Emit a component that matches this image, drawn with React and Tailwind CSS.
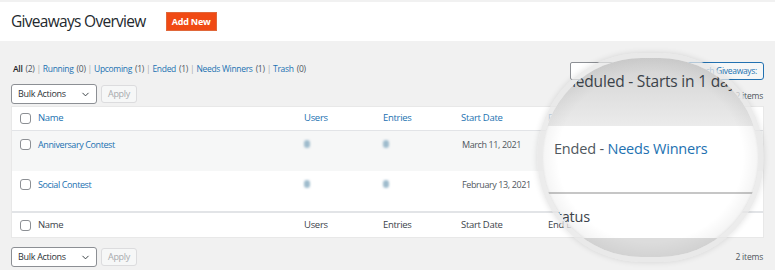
import { ChevronDown } from 'lucide-react';

const filters = [
  { label: 'All', count: 2, current: true },
  { label: 'Running', count: 0 },
  { label: 'Upcoming', count: 1 },
  { label: 'Ended', count: 1 },
  { label: 'Needs Winners', count: 1 },
  { label: 'Trash', count: 0 },
];

const rows = [
  { name: 'Anniversary Contest', date: 'March 11, 2021', alt: true },
  { name: 'Social Contest', date: 'February 13, 2021' },
];

function Checkbox() {
  return <span className="block w-[11px] h-[11px] rounded-[3px] border border-[#8c8f94] bg-white" />;
}

function BulkBar() {
  return (
    <div className="flex items-center gap-[4px]">
      <div className="w-[86px] h-[20px] flex items-center justify-between pl-[6px] pr-[5px] bg-white border border-[#8c8f94] rounded-[3px] text-[9px] tracking-[-0.3px] text-[#2c3338]">
        <span>Bulk Actions</span>
        <ChevronDown className="w-[11px] h-[11px]" strokeWidth={2} />
      </div>
      <div className="w-[36px] h-[18px] flex items-center justify-center border border-[#dcdcde] rounded-[3px] bg-[#f6f7f7] text-[9px] tracking-[-0.3px] text-[#a7aaad]">
        Apply
      </div>
    </div>
  );
}

function HeadRow({ linked, top }) {
  const c = linked ? 'text-[#2271b1]' : 'text-[#3c434a]';
  return (
    <div className={`flex items-center text-[9.5px] tracking-[-0.3px] ${top ? 'h-[24px] border-b border-[#e2e4e7]' : 'h-[26px] border-t-2 border-[#e2e4e7]'}`}>
      <div className="w-[26px] pl-[8px]"><Checkbox /></div>
      <div className={`w-[266px] ${c}`}>Name</div>
      <div className={`w-[79px] ${c}`}>Users</div>
      <div className={`w-[78px] ${c}`}>Entries</div>
      <div className={`w-[87px] ${c}`}>Start Date</div>
      <div className={`w-[90px] ${c}`}>End Date</div>
      <div className={c}>Status</div>
    </div>
  );
}

function Dot() {
  return <span className="block w-[6px] h-[8px] rounded-full bg-[#9fbccd] blur-[1px]" />;
}

export default function App() {
  return (
    <div className="relative w-[775px] h-[270px] overflow-hidden bg-[#f1f1f1] font-['Open_Sans',sans-serif]">
      {/* header */}
      <div className="mt-[2px] h-[39px] bg-white flex items-center pl-[11px]">
        <h1 className="text-[15.5px] text-[#23282d] tracking-[-0.7px]">Giveaways Overview</h1>
        <span className="ml-[20px] h-[19px] px-[5px] flex items-center bg-[#f04a14] border border-[#e0673a] text-white text-[9px] font-bold tracking-[-0.2px]">
          Add New
        </span>
      </div>

      <div className="px-[11px]">
        <div className="flex items-start justify-between mt-[19px]">
          <div className="pt-[3px] pl-[2px] flex items-center text-[8.5px] text-[#50575e] tracking-[-0.3px]">
            {filters.map((f, i) => (
              <span key={f.label} className="flex items-center">
                {i > 0 && <span className="mx-[2px] text-[#a7aaad]">|</span>}
                <span className={f.current ? 'font-semibold text-[#1d2327]' : 'text-[#2271b1]'}>{f.label}</span>
                <span className="ml-[3px]">({f.count})</span>
              </span>
            ))}
          </div>
          <div className="flex items-center gap-[4px] mt-[2px]">
            <div className="w-[108px] h-[18px] bg-white border border-[#8c8f94] rounded-[2px]" />
            <div className="h-[18px] px-[6px] flex items-center border border-[#2271b1] rounded-[3px] bg-[#f6f7f7] text-[#2271b1] text-[8.5px] tracking-[-0.3px]">
              Search Giveaways:
            </div>
          </div>
        </div>

        <div className="flex items-center justify-between mt-[4px]">
          <BulkBar />
          <span className="text-[8.5px] tracking-[-0.2px] text-[#50575e] pr-[1px] mt-[4px]">2 items</span>
        </div>

        {/* table */}
        <div className="mt-[2px] bg-white border border-[#e8e8e8]">
          <HeadRow linked top />
          {rows.map((r) => (
            <div key={r.name} className={`flex items-start h-[40px] pt-[7px] text-[9px] tracking-[-0.4px] ${r.alt ? 'bg-[#f6f7f7]' : 'bg-white'}`}>
              <div className="w-[26px] pl-[8px] pt-[1px]"><Checkbox /></div>
              <div className="w-[266px] text-[#2271b1]">{r.name}</div>
              <div className="w-[79px] pt-[2px]"><Dot /></div>
              <div className="w-[79px] pt-[2px]"><Dot /></div>
              <div className="text-[#50575e]">{r.date}</div>
            </div>
          ))}
          <HeadRow />
        </div>

        <div className="flex items-center justify-between mt-[9px]">
          <BulkBar />
          <span className="text-[8.5px] tracking-[-0.2px] text-[#50575e] pr-[1px]">2 items</span>
        </div>
      </div>

      {/* magnifier lens */}
      <div className="absolute left-[537px] top-[53px] w-[227px] h-[209px] rounded-full bg-[rgba(230,230,230,0.75)] shadow-[0_0_6px_rgba(0,0,0,0.12)]">
        <div className="absolute inset-[5px] rounded-full overflow-hidden bg-white shadow-[inset_0_0_3px_rgba(0,0,0,0.12)]">
          <div className="absolute left-0 right-0 top-0 h-[68px] bg-[linear-gradient(#d2d2d2,#ebebeb)]" />
          <div className="absolute left-0 right-0 top-[180px] bottom-0 bg-[#dcdcdc]" />
          <div className="absolute left-0 right-0 top-[134px] h-[2px] bg-[#c6c6c6]" />
          <div className="absolute left-[9px] top-[12px] whitespace-nowrap text-[15.5px] leading-[22px] text-[#3c434a] tracking-[-0.2px]">
            Scheduled - Starts in 1 day
          </div>
          <div className="absolute left-[12px] top-[80px] whitespace-nowrap text-[14.5px] leading-[22px] text-[#50575e] tracking-[-0.2px]">
            Ended - <span className="text-[#2271b1]">Needs Winners</span>
          </div>
          <div className="absolute left-[7px] top-[148px] whitespace-nowrap text-[14.5px] leading-[22px] text-[#3c434a] tracking-[-0.2px]">
            Status
          </div>
          <div className="absolute inset-0 rounded-full bg-[radial-gradient(ellipse_at_center,rgba(0,0,0,0)_60%,rgba(0,0,0,0.16)_100%)]" />
        </div>
      </div>
    </div>
  );
}
